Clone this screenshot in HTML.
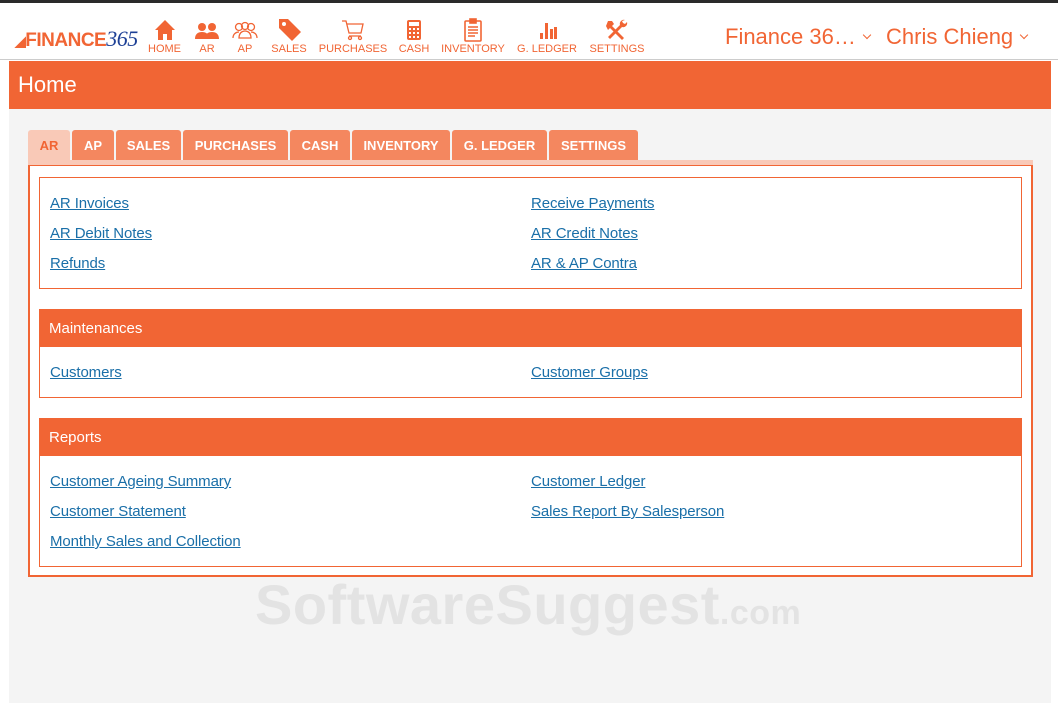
<!DOCTYPE html>
<html><head><meta charset="utf-8"><style>
*{margin:0;padding:0;box-sizing:border-box}
body{width:1058px;height:703px;overflow:hidden;background:#fff;font-family:"Liberation Sans",Arial,sans-serif;position:relative}
.a{position:absolute}
.top{left:0;top:0;width:1058px;height:3px;background:#2a2a2a}
.hdr{left:0;top:3px;width:1058px;height:57px;background:#fff;border-bottom:1px solid #ccc}
.gray{left:9px;top:61px;width:1042px;height:642px;background:#f4f4f4}
.bar{left:9px;top:61px;width:1042px;height:48px;background:#f16534;color:#fff;font-size:22px;padding:11px 0 0 9px}
.nav{top:17px;text-align:center;color:#f16534;font-size:11px;line-height:13px}
.nav .ic{height:26px;display:flex;align-items:center;justify-content:center}
.tab{top:130px;height:30px;background:#f4875f;color:#fff;font-weight:bold;font-size:13px;line-height:31px;text-align:center;border-radius:3px 3px 0 0}
.strip{left:28px;top:160px;width:1005px;height:6px;background:#f9c9b7}
.panel{left:28px;top:165px;width:1005px;height:412px;background:#fff;border:2px solid #f16534;border-top-width:1px}
.box{left:39px;width:983px;border:1px solid #f16534;background:#fff}
.bh{left:39px;width:983px;height:38px;background:#f16534;color:#fff;font-size:15px;padding:11px 0 0 10px}
.lk{color:#1a6fa8;text-decoration:underline;font-size:15px;position:absolute;letter-spacing:-0.1px}
.wm{left:255px;top:572px;font-size:56px;font-weight:bold;color:#e3e3e3;letter-spacing:0.5px}
.chev{display:inline-block;width:7px;height:7px;border-right:2px solid #f16534;border-bottom:2px solid #f16534;transform:rotate(45deg);margin:0 0 6px 8px}
</style></head><body>
<div class="a top"></div>
<div class="a hdr"></div>
<div class="a gray"></div>
<div class="a bar">Home</div>
<div class="a" style="left:15px;top:26px;font-weight:900;font-size:19px;color:#f16534;letter-spacing:-0.5px"><span style="font-size:14px">◢</span>FINANCE<i style="font-family:'Liberation Serif',serif;color:#1c3f95;font-weight:normal;font-size:22px">365</i></div>
<div class="a nav" style="left:148px;width:33px"><div class="ic"><svg width="22" height="22" viewBox="0 0 22 22"><path d="M11 1L1 11h3v10h5v-6h4v6h5V11h3z" fill="#f16534"/></svg></div>HOME</div>
<div class="a nav" style="left:193px;width:28px"><div class="ic"><svg width="26" height="22" viewBox="0 0 26 22"><circle cx="8" cy="8" r="4" fill="#f16534"/><circle cx="18" cy="8" r="4" fill="#f16534"/><path d="M1 20c0-5 3-7 7-7s7 2 7 7zM11 20c0-5 3-7 7-7s7 2 7 7z" fill="#f16534"/></svg></div>AR</div>
<div class="a nav" style="left:230px;width:30px"><div class="ic"><svg width="26" height="22" viewBox="0 0 26 22" fill="none" stroke="#f16534" stroke-width="1.3"><circle cx="7" cy="8" r="3.5"/><circle cx="13" cy="7" r="3.5"/><circle cx="19" cy="8" r="3.5"/><path d="M1 19c0-4 3-6 6-6M25 19c0-4-3-6-6-6M7 19c0-5 3-7 6-7s6 2 6 7z"/></svg></div>AP</div>
<div class="a nav" style="left:270px;width:38px"><div class="ic"><svg width="26" height="24" viewBox="0 0 26 24"><path d="M3 1h9l13 13-9 9L3 10z" fill="#f16534"/><circle cx="8" cy="6" r="2" fill="#fff"/></svg></div>SALES</div>
<div class="a nav" style="left:318px;width:70px"><div class="ic"><svg width="24" height="22" viewBox="0 0 24 22" fill="none" stroke="#f16534" stroke-width="1.3"><path d="M1 2h4l3 12h12l2-9H6M8 17h12"/><circle cx="9" cy="19" r="1.5"/><circle cx="19" cy="19" r="1.5"/></svg></div>PURCHASES</div>
<div class="a nav" style="left:397px;width:34px"><div class="ic"><svg width="18" height="22" viewBox="0 0 18 22"><rect x="2" y="1" width="14" height="20" rx="2" fill="#f16534"/><rect x="4" y="3" width="10" height="4" fill="#fff"/><g fill="#fff"><rect x="4" y="9" width="2" height="2"/><rect x="8" y="9" width="2" height="2"/><rect x="12" y="9" width="2" height="2"/><rect x="4" y="13" width="2" height="2"/><rect x="8" y="13" width="2" height="2"/><rect x="12" y="13" width="2" height="2"/><rect x="4" y="17" width="2" height="2"/><rect x="8" y="17" width="2" height="2"/><rect x="12" y="17" width="2" height="2"/></g></svg></div>CASH</div>
<div class="a nav" style="left:441px;width:64px"><div class="ic"><svg width="20" height="24" viewBox="0 0 20 24" fill="none" stroke="#f16534" stroke-width="1.6"><rect x="2" y="3" width="16" height="20" rx="1"/><rect x="7" y="1" width="6" height="4" fill="#f16534"/><path d="M5 9h10M5 12h10M5 15h10M5 18h7"/></svg></div>INVENTORY</div>
<div class="a nav" style="left:515px;width:64px"><div class="ic"><svg width="20" height="22" viewBox="0 0 20 22" fill="#f16534"><rect x="3" y="14" width="3" height="6"/><rect x="8" y="4" width="3" height="16"/><rect x="13" y="10" width="3" height="10"/><rect x="17" y="8" width="3" height="12"/></svg></div>G. LEDGER</div>
<div class="a nav" style="left:589px;width:56px"><div class="ic"><svg width="24" height="22" viewBox="0 0 24 22" fill="#f16534"><path d="M3 2l4 0 2 3-2 2 12 12-2 2L5 9 3 11 1 7z"/><path d="M20 1a4 4 0 00-5 5L3 18l2 2 12-12a4 4 0 005-5l-2 2-2-1-1-2z"/></svg></div>SETTINGS</div>
<div class="a" style="left:725px;top:24px;font-size:22px;color:#f16534">Finance 36…<span class="chev" style="width:6px;height:6px;border-width:1.5px"></span></div>
<div class="a" style="left:886px;top:24px;font-size:22px;color:#f16534">Chris Chieng<span class="chev" style="width:6px;height:6px;border-width:1.5px"></span></div>

<div class="a strip"></div>
<div class="a tab" style="left:28px;width:42px;background:#f9c9b7;color:#f16534">AR</div>
<div class="a tab" style="left:72px;width:42px">AP</div>
<div class="a tab" style="left:116px;width:65px">SALES</div>
<div class="a tab" style="left:183px;width:105px">PURCHASES</div>
<div class="a tab" style="left:290px;width:60px">CASH</div>
<div class="a tab" style="left:352px;width:98px">INVENTORY</div>
<div class="a tab" style="left:452px;width:95px">G. LEDGER</div>
<div class="a tab" style="left:549px;width:89px">SETTINGS</div>
<div class="a panel"></div>

<div class="a box" style="top:177px;height:112px"></div>
<a class="lk" style="left:50px;top:195px">AR Invoices</a>
<a class="lk" style="left:531px;top:195px">Receive Payments</a>
<a class="lk" style="left:50px;top:225px">AR Debit Notes</a>
<a class="lk" style="left:531px;top:225px">AR Credit Notes</a>
<a class="lk" style="left:50px;top:255px">Refunds</a>
<a class="lk" style="left:531px;top:255px">AR &amp; AP Contra</a>

<div class="a box" style="top:309px;height:89px"></div>
<div class="a bh" style="top:309px">Maintenances</div>
<a class="lk" style="left:50px;top:364px">Customers</a>
<a class="lk" style="left:531px;top:364px">Customer Groups</a>

<div class="a box" style="top:418px;height:149px"></div>
<div class="a bh" style="top:418px">Reports</div>
<a class="lk" style="left:50px;top:473px">Customer Ageing Summary</a>
<a class="lk" style="left:531px;top:473px">Customer Ledger</a>
<a class="lk" style="left:50px;top:503px">Customer Statement</a>
<a class="lk" style="left:531px;top:503px">Sales Report By Salesperson</a>
<a class="lk" style="left:50px;top:533px">Monthly Sales and Collection</a>

<div class="a wm">SoftwareSuggest<span style="font-size:34px">.com</span></div>
</body></html>
